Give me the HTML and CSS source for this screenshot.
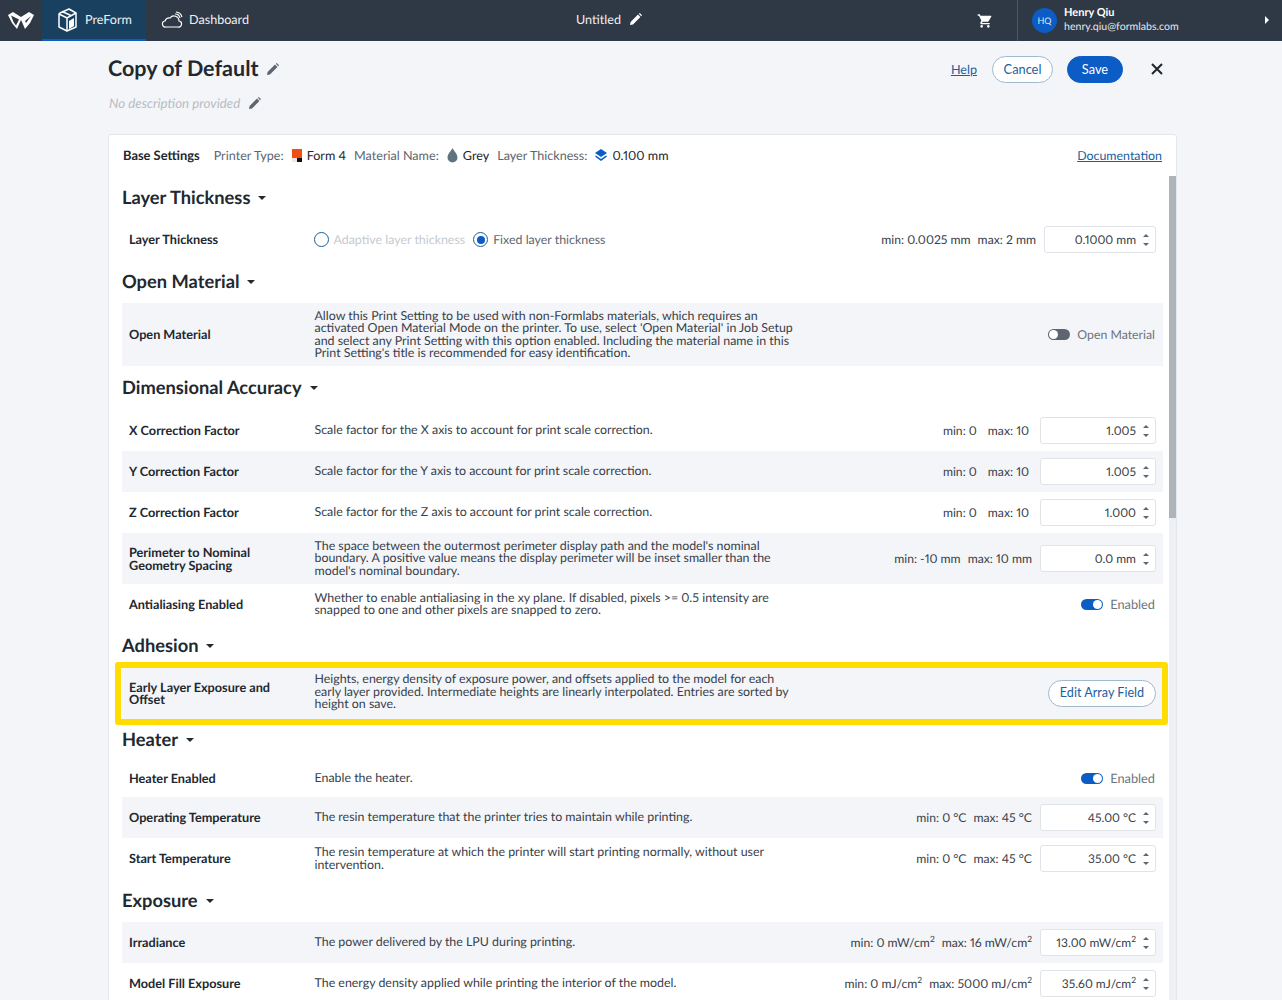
FILE: index.html
```html
<!DOCTYPE html>
<html lang="en">
<head>
<meta charset="utf-8">
<title>Copy of Default</title>
<link rel="stylesheet" href="styles.css">
</head>
<body>
<header class="topbar">
  <div class="logo">
    <svg width="26" height="17" viewBox="0 0 26 17"><path d="M0 3L5 0l8 5 8-5 5 3-4 8-5 6-3-7-1-2-1 2-3 7-5-6z" fill="#fff"/><path d="M3 3.500l8 4-3 6-2.500-3.500zM23 4l-6 5 1 2z" fill="#2f3845"/></svg>
  </div>
  <nav class="tabs">
    <a class="tab tab-active">
      <svg width="19" height="24" viewBox="0 0 19 24" fill="none" stroke="#fff" stroke-width="1.500"><path d="M2 5l9-4 7 4v14l-9 4-8-4V6z" stroke-linejoin="round"/><path d="M1 6l8 4 9-5M9 10v13M4 3.500l8 3.500v2"/><path d="M11 13l5-3v8l-5 3z" fill="#fff" stroke="none"/></svg>
      <span>PreForm</span>
    </a>
    <a class="tab tab-dash">
      <svg width="22" height="18" viewBox="0 0 22 18" fill="none" stroke="#fff" stroke-width="1.200"><path d="M5 16h12a3 3 0 0 0 1-6 5 5 0 0 0-9-3 4 4 0 0 0-5 3 3 3 0 0 0 1 6z"/><path d="M14 3a5 5 0 0 1 5 4M15 1a7 7 0 0 1 6 5"/></svg>
      <span>Dashboard</span>
    </a>
  </nav>
  <div class="doc-title">
    <span>Untitled</span>
    <svg width="12" height="12" viewBox="0 0 12 12"><path d="M0 12l.6-3L8 1.600 10.400 4 3 11.400zM8.800.8l1-.8 2.200 2.200-.8 1z" fill="#fff"/></svg>
  </div>
  <div class="cart">
    <svg width="16" height="16" viewBox="0 0 24 24"><path d="M7 18a2 2 0 1 0 0 4 2 2 0 0 0 0-4zm10 0a2 2 0 1 0 0 4 2 2 0 0 0 0-4zM1 2v2h2l3.600 7.600L5.200 14A2 2 0 0 0 7 17h12v-2H7.400l1.100-2h7.500c.7 0 1.400-.4 1.700-1L21.700 5A1 1 0 0 0 20.800 4H5.200l-.9-2z" fill="#fff"/></svg>
  </div>
  <div class="user">
    <div class="avatar">HQ</div>
    <div class="user-text">
      <div class="user-name">Henry Qiu</div>
      <div class="user-mail">henry.qiu@formlabs.com</div>
    </div>
    <div class="user-arrow"></div>
  </div>
</header>

<main class="page">
  <div class="page-head">
    <div class="title-block">
      <h1 class="title">Copy of Default
        <svg width="12" height="12" viewBox="0 0 12 12"><path d="M0 12l.6-3L8 1.600 10.400 4 3 11.400zM8.800.8l1-.8 2.200 2.200-.8 1z" fill="#5d6670"/></svg>
      </h1>
      <p class="description"><em>No description provided</em>
        <svg width="12" height="12" viewBox="0 0 12 12"><path d="M0 12l.6-3L8 1.600 10.400 4 3 11.400zM8.800.8l1-.8 2.200 2.200-.8 1z" fill="#5d6670"/></svg>
      </p>
    </div>
    <div class="actions">
      <a class="link link-help">Help</a>
      <button class="btn btn-outline">Cancel</button>
      <button class="btn btn-primary">Save</button>
      <svg class="close" width="12" height="12" viewBox="0 0 12 12"><path d="M1 1l10 10M11 1L1 11" stroke="#20262d" stroke-width="2"/></svg>
    </div>
  </div>

  <section class="card">
    <div class="scrollbar"></div>
    <div class="card-head">
      <strong class="base">Base Settings</strong>
      <span class="meta">Printer Type:</span>
      <svg class="meta-icon" width="10" height="13" viewBox="0 0 10 13"><rect width="10" height="13" fill="#f04e12"/><rect x="5" y="9" width="5" height="4" fill="#111"/><rect y="9" width="5" height="4" fill="#f5e6dc"/></svg>
      <span class="val">Form 4</span>
      <span class="meta">Material Name:</span>
      <svg class="meta-icon" width="11" height="15" viewBox="0 0 11 15"><path d="M5.500 0C4 3 .5 6 .5 9.500a5 5 0 0 0 10 0C10.500 6 7 3 5.500 0z" fill="#607480"/></svg>
      <span class="val">Grey</span>
      <span class="meta">Layer Thickness:</span>
      <svg class="meta-icon" width="12" height="12" viewBox="0 0 12 12"><path d="M6 0l6 4-6 4-6-4z" fill="#0b5cc5"/><path d="M1 6.500L6 10l5-3.500 1 1L6 12 0 7.500z" fill="#0b5cc5"/></svg>
      <span class="val">0.100 mm</span>
      <a class="link link-doc">Documentation</a>
    </div>

    <div class="settings">
      <h2 class="heading">Layer Thickness <i class="caret"></i></h2>
      <div class="row">
        <div class="label">Layer Thickness</div>
        <div class="radios">
          <span class="radio"></span><span class="radio-text muted">Adaptive layer thickness</span>
          <span class="radio radio-on"></span><span class="radio-text">Fixed layer thickness</span>
        </div>
        <div class="control">
          <span class="range">min: 0.0025 mm</span><span class="range">max: 2 mm</span>
          <div class="num num-narrow"><span>0.1000 mm</span><i class="spin"></i></div>
        </div>
      </div>

      <h2 class="heading">Open Material <i class="caret"></i></h2>
      <div class="row row-alt row-63">
        <div class="label">Open Material</div>
        <div class="desc">Allow this Print Setting to be used with non-Formlabs materials, which requires an activated Open Material Mode on the printer. To use, select 'Open Material' in Job Setup and select any Print Setting with this option enabled. Including the material name in this Print Setting's title is recommended for easy identification.</div>
        <div class="control"><span class="toggle"></span><span class="toggle-text">Open Material</span></div>
      </div>

      <h2 class="heading heading-44">Dimensional Accuracy <i class="caret"></i></h2>
      <div class="row">
        <div class="label">X Correction Factor</div>
        <div class="desc">Scale factor for the X axis to account for print scale correction.</div>
        <div class="control control-gap"><span class="range">min: 0</span><span class="range">max: 10</span><div class="num"><span>1.005</span><i class="spin"></i></div></div>
      </div>
      <div class="row row-alt">
        <div class="label">Y Correction Factor</div>
        <div class="desc">Scale factor for the Y axis to account for print scale correction.</div>
        <div class="control control-gap"><span class="range">min: 0</span><span class="range">max: 10</span><div class="num"><span>1.005</span><i class="spin"></i></div></div>
      </div>
      <div class="row">
        <div class="label">Z Correction Factor</div>
        <div class="desc">Scale factor for the Z axis to account for print scale correction.</div>
        <div class="control control-gap"><span class="range">min: 0</span><span class="range">max: 10</span><div class="num"><span>1.000</span><i class="spin"></i></div></div>
      </div>
      <div class="row row-alt row-51">
        <div class="label">Perimeter to Nominal Geometry Spacing</div>
        <div class="desc">The space between the outermost perimeter display path and the model's nominal boundary. A positive value means the display perimeter will be inset smaller than the model's nominal boundary.</div>
        <div class="control"><span class="range">min: -10 mm</span><span class="range">max: 10 mm</span><div class="num"><span>0.0 mm</span><i class="spin"></i></div></div>
      </div>
      <div class="row row-40">
        <div class="label">Antialiasing Enabled</div>
        <div class="desc">Whether to enable antialiasing in the xy plane. If disabled, pixels &gt;= 0.5 intensity are snapped to one and other pixels are snapped to zero.</div>
        <div class="control"><span class="toggle toggle-on"></span><span class="toggle-text toggle-text-on">Enabled</span></div>
      </div>

      <h2 class="heading">Adhesion <i class="caret"></i></h2>
      <div class="row row-alt row-53 row-highlight">
        <div class="label">Early Layer Exposure and Offset</div>
        <div class="desc">Heights, energy density of exposure power, and offsets applied to the model for each early layer provided. Intermediate heights are linearly interpolated. Entries are sorted by height on save.</div>
        <div class="control"><button class="btn btn-outline btn-edit">Edit Array Field</button></div>
      </div>

      <h2 class="heading heading-39">Heater <i class="caret"></i></h2>
      <div class="row row-38">
        <div class="label">Heater Enabled</div>
        <div class="desc">Enable the heater.</div>
        <div class="control"><span class="toggle toggle-on"></span><span class="toggle-text toggle-text-on">Enabled</span></div>
      </div>
      <div class="row row-alt">
        <div class="label">Operating Temperature</div>
        <div class="desc">The resin temperature that the printer tries to maintain while printing.</div>
        <div class="control"><span class="range">min: 0 °C</span><span class="range">max: 45 °C</span><div class="num"><span>45.00 °C</span><i class="spin"></i></div></div>
      </div>
      <div class="row">
        <div class="label">Start Temperature</div>
        <div class="desc">The resin temperature at which the printer will start printing normally, without user intervention.</div>
        <div class="control"><span class="range">min: 0 °C</span><span class="range">max: 45 °C</span><div class="num"><span>35.00 °C</span><i class="spin"></i></div></div>
      </div>

      <h2 class="heading">Exposure <i class="caret"></i></h2>
      <div class="row row-alt">
        <div class="label">Irradiance</div>
        <div class="desc">The power delivered by the LPU during printing.</div>
        <div class="control"><span class="range">min: 0 mW/cm<sup>2</sup></span><span class="range">max: 16 mW/cm<sup>2</sup></span><div class="num"><span>13.00 mW/cm<sup>2</sup></span><i class="spin"></i></div></div>
      </div>
      <div class="row">
        <div class="label">Model Fill Exposure</div>
        <div class="desc">The energy density applied while printing the interior of the model.</div>
        <div class="control"><span class="range">min: 0 mJ/cm<sup>2</sup></span><span class="range">max: 5000 mJ/cm<sup>2</sup></span><div class="num"><span>35.60 mJ/cm<sup>2</sup></span><i class="spin"></i></div></div>
      </div>
    </div>
  </section>
</main>
</body>
</html>
```

FILE: styles.css
```css
* { box-sizing: border-box; }
html, body { margin: 0; height: 1000px; overflow: hidden; }
body { background: #f3f5f9; font-family: "Lato", "Open Sans", sans-serif; color: #20262d; font-size: 12.5px; text-rendering: geometricPrecision; font-variant-numeric: proportional-nums; }

.topbar { height: 41px; background: #2f3845; display: flex; align-items: stretch; color: #fff; }
.logo { width: 42px; display: flex; align-items: center; justify-content: center; padding-right: 1px; }
.tabs { display: flex; }
.tab { display: flex; align-items: center; gap: 8px; padding: 0 0 2px 16px; font-size: 12.6px; color: #eef1f4; width: 104px; }
.tab-dash { padding-left: 15px; gap: 6px; width: auto; }
.tab-active { background: #1a4060; border-bottom: 2px solid #0b5cc5; padding-bottom: 0; }
.doc-title { position: absolute; left: 576px; top: 0; height: 41px; padding-bottom: 3px; display: flex; align-items: center; gap: 9px; font-size: 12.6px; color: #eef1f4; }
.cart { margin-left: auto; width: 64px; display: flex; align-items: center; justify-content: center; }
.user { width: 265px; border-left: 1px solid #4b5460; display: flex; align-items: center; padding-left: 14px; position: relative; }
.avatar { width: 25px; height: 25px; border-radius: 50%; background: #0b5cc5; font-size: 9px; display: flex; align-items: center; justify-content: center; color: #dfe9f7; }
.user-text { margin: 0 0 1px 7px; font-size: 10.600px; line-height: 14px; }
.user-name { font-weight: 700; font-size: 11px; }
.user-mail { color: #e4e7ea; }
.user-arrow { position: absolute; right: 13px; top: 16px; border-left: 4px solid #fff; border-top: 4px solid transparent; border-bottom: 4px solid transparent; }

.page { width: 1069px; margin-left: 108px; }
.page-head { height: 93px; display: flex; justify-content: space-between; align-items: flex-start; }
.title { margin: 0; padding-top: 14px; font-size: 21.500px; line-height: 27px; font-weight: 700; display: flex; align-items: center; gap: 9px; color: #22282f; }
.description { margin: 12px 0 0 1px; font-size: 13.300px; line-height: 18px; color: #b7bcc2; display: flex; align-items: center; gap: 9px; }
.actions { display: flex; align-items: center; padding-top: 15px; }
.link { color: #1a5f9e; text-decoration: underline; font-size: 12.6px; }
.link-help { margin-right: 15px; padding-bottom: 1px; }
.btn { font: inherit; font-size: 12.8px; height: 27px; border-radius: 14px; padding: 0 0 2px; }
.btn-outline { background: #fff; border: 1px solid #9fb9cf; color: #1a5f9e; width: 61px; }
.btn-primary { background: #0b5cc5; border: 1px solid #0b5cc5; color: #fff; width: 56px; margin-left: 14px; }
.close { margin: 0 14px 1px 28px; }

.card { background: #fff; border: 1px solid #e3e6ea; border-radius: 3px; height: 900px; position: relative; padding: 0 13px; }
.scrollbar { position: absolute; right: 0; top: 41px; width: 7px; height: 342px; background: #aeb4bb; }
.scrollbar::after { content: ""; position: absolute; left: 0; top: 342px; width: 7px; height: 600px; background: #eef0f3; }
.card-head { height: 41px; display: flex; align-items: center; font-size: 12.6px; padding: 0 1px 1px 0; }
.base { font-weight: 700; margin: 0 14px 0 1px; font-size: 12.900px; }
.meta { color: #5d6670; margin-right: 8px; }
.meta-icon { margin-right: 5px; flex: none; }
.val { margin-right: 8px; color: #20262d; }
.link-doc { margin-left: auto; font-size: 12.400px; }

.heading { margin: 0; height: 43px; padding-bottom: 2px; display: flex; align-items: center; gap: 4px; font-size: 18.300px; font-weight: 700; color: #22282f; }
.heading-44 { height: 44px; }
.heading-39 { height: 39px; }
.caret { display: inline-block; border-top: 4px solid #22282f; border-left: 4px solid transparent; border-right: 4px solid transparent; margin: 2px 0 0 4px; }

.row { display: grid; grid-template-columns: 185.500px 1fr auto; align-items: center; min-height: 41px; padding: 0 7px; position: relative; }
.row-alt { background: #f3f5f9; }
.row-63 { height: 63px; }
.row-51 { height: 51px; }
.row-53 { height: 53px; }
.row-40 { height: 40px; min-height: 40px; }
.row-38 { height: 38px; min-height: 38px; }
.row-highlight::after { content: ""; position: absolute; inset: -5px -5px -5px -7px; border: 6px solid #ffdd00; border-radius: 3px; pointer-events: none; }
.label { font-size: 12.700px; line-height: 12.500px; font-weight: 700; width: 160px; color: #22282f; }
.row-highlight .label { width: 150px; padding-bottom: 1px; }
.desc { font-size: 12.400px; line-height: 12.500px; color: #39414a; max-width: 484px; }
.row-highlight .desc { padding-bottom: 3px; }
.radios { display: flex; align-items: center; font-size: 12.400px; color: #5d6670; margin-left: -1px; }
.radio { width: 15px; height: 15px; border-radius: 50%; border: 1.500px solid #1a5f9e; margin-right: 5px; background: #fff; position: relative; }
.radio-on::after { content: ""; position: absolute; inset: 2.500px; border-radius: 50%; background: #0b5cc5; }
.radio-text { margin-right: 8px; }
.muted { color: #c5cacf; }
.control { display: flex; align-items: center; justify-content: flex-end; font-size: 12.200px; color: #39414a; }
.range { margin-right: 7px; white-space: nowrap; }
.range + .range { margin-right: 8px; }
.control-gap .range { margin-right: 11px; }
.control-gap .range + .range { margin-right: 11px; }
sup { font-size: 8.500px; line-height: 0; }
.num { width: 116px; height: 27px; background: #fff; border: 1px solid #e0e3e7; border-radius: 3px; display: flex; align-items: center; justify-content: flex-end; padding-right: 19px; position: relative; white-space: nowrap; color: #39414a; font-size: 12px; }
.num-narrow { width: 112px; }
.spin { position: absolute; right: 5px; top: 7px; width: 7px; height: 12px; }
.spin::before, .spin::after { content: ""; position: absolute; left: 0; border-left: 3px solid transparent; border-right: 3px solid transparent; }
.spin::before { top: 0; border-bottom: 3px solid #5d6670; }
.spin::after { bottom: 0; border-top: 3px solid #5d6670; }
.toggle { width: 22px; height: 11px; border-radius: 6px; background: #5d6670; position: relative; margin-right: 7px; }
.toggle::after { content: ""; position: absolute; left: 1px; top: 1px; width: 9px; height: 9px; border-radius: 50%; background: #fff; }
.toggle-on { background: #0b5cc5; }
.toggle-on::after { left: 12px; }
.toggle-text { color: #6b747d; margin-right: 1px; font-size: 12.300px; }
.toggle-text-on { font-size: 12.800px; }
.btn-edit { width: 108px; font-size: 12.600px; }
```
